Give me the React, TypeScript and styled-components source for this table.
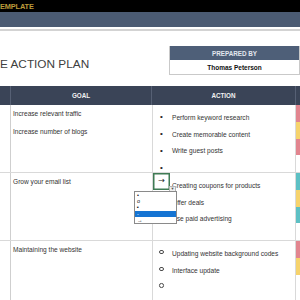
import React from 'react'
import styled, { createGlobalStyle } from 'styled-components'

const GlobalStyle = createGlobalStyle`
  body {
    margin: 0;
    background: #ffffff;
    font-family: 'Liberation Sans', Arial, sans-serif;
    overflow: hidden;
  }
`

const Page = styled.div`
  width: 300px;
  height: 300px;
  overflow: hidden;
  background: #ffffff;
`

const TopBar = styled.div`
  height: 12px;
  background: #000000;
  display: flex;
  align-items: center;
`

const TopTitle = styled.span`
  font-size: 7.4px;
  font-weight: 700;
  color: #bb9a3a;
  letter-spacing: -0.15px;
`

const Band = styled.div`
  height: 15px;
  background: #4b5b73;
`

const BandRule = styled.div`
  height: 2px;
  margin-top: 2px;
  background: #d3d3d3;
`

const InfoSection = styled.div`
  height: 55px;
  display: flex;
  align-items: flex-start;
  justify-content: space-between;
  padding-top: 15px;
  box-sizing: border-box;
`

const PlanTitle = styled.h1`
  margin: 11px 0 0 0;
  font-size: 11.8px;
  font-weight: 400;
  color: #404040;
  white-space: nowrap;
`

const InfoBoxes = styled.div`
  display: flex;
  gap: 2px;
  margin-right: -60px;
`

const InfoBox = styled.div<{ $width: number }>`
  width: ${(p) => p.$width}px;
  border: 1px solid #c9c9c9;
  border-top: none;
`

const InfoHead = styled.div`
  height: 14px;
  background: #4e5f78;
  color: #e3e7ee;
  font-size: 6.3px;
  font-weight: 700;
  display: flex;
  align-items: center;
  justify-content: center;
`

const InfoValue = styled.div`
  height: 14px;
  color: #111111;
  font-size: 6.5px;
  font-weight: 700;
  display: flex;
  align-items: center;
  justify-content: center;
`

const TableHead = styled.div`
  height: 19px;
  display: grid;
  grid-template-columns: 11px 141px 144px 4px;
  background: #3a4457;
`

const HeadCell = styled.div`
  border-right: 1px solid #566074;
  color: #f2f2f2;
  font-size: 6.3px;
  font-weight: 700;
  display: flex;
  align-items: center;
  justify-content: center;
  &:last-child {
    border-right: none;
  }
`

const Row = styled.div`
  display: grid;
  grid-template-columns: 11px 141px 148px;
  border-bottom: 1px solid #d9d9d9;
`

const LeadCell = styled.div`
  border-right: 1px solid #cfcfcf;
`

const GoalCell = styled.div`
  padding: 4px 0 0 2px;
  display: flex;
  flex-direction: column;
`

const GoalText = styled.div`
  height: 17.5px;
  font-size: 6.6px;
  line-height: 10px;
  color: #333333;
`

const ActionCell = styled.div`
  border-left: 1px solid #d9d9d9;
  display: flex;
  flex-direction: column;
`

const ActionLine = styled.div`
  height: 16.75px;
  display: grid;
  grid-template-columns: 17px 1fr 4px;
`

const Bullet = styled.div<{ $selected?: boolean; $font?: string }>`
  position: relative;
  display: flex;
  align-items: flex-end;
  justify-content: center;
  padding-bottom: 0.5px;
  font-family: ${(p) => p.$font ?? "'Liberation Sans', Arial, sans-serif"};
  font-size: 8px;
  line-height: 9px;
  color: #262626;
  box-sizing: border-box;
  ${(p) =>
    p.$selected
      ? 'border: 1px solid #3f7b54; box-shadow: inset 0 0 0 0.5px #3f7b54; align-items: center; padding: 0 0 1px 0;'
      : ''}
`

/* hollow "o" marker drawn as a ring */
const Ring = styled.span`
  width: 2.5px;
  height: 2.5px;
  margin-bottom: 3px;
  border: 1px solid #4a4a4a;
  border-radius: 50%;
`

const ActionText = styled.div`
  display: flex;
  align-items: flex-end;
  padding: 0 0 0 2px;
  font-size: 6.6px;
  line-height: 8px;
  color: #333333;
  white-space: nowrap;
  border-right: 1px solid #d9d9d9;
`

const Strip = styled.div<{ $color: string }>`
  background: ${(p) => p.$color};
`

const DropButton = styled.div`
  position: absolute;
  left: 15px;
  top: 12px;
  width: 7px;
  height: 6px;
  background: #eeeeee;
  border: 1px solid #b5b5b5;
  box-sizing: border-box;
  font-family: 'Liberation Sans', Arial, sans-serif;
  font-size: 4px;
  line-height: 4px;
  color: #555555;
  display: flex;
  align-items: center;
  justify-content: center;
  z-index: 2;
`

const DropList = styled.div`
  position: absolute;
  left: -20px;
  top: 17px;
  width: 43px;
  background: #ffffff;
  border: 1px solid #8a8a8a;
  box-sizing: border-box;
  font-family: 'Liberation Sans', Arial, sans-serif;
  z-index: 3;
`

const DropItem = styled.div<{ $active?: boolean }>`
  height: 6.2px;
  font-size: 5.5px;
  line-height: 6.2px;
  padding-left: 2px;
  text-align: left;
  color: ${(p) => (p.$active ? '#ffffff' : '#111111')};
  background: ${(p) => (p.$active ? '#1574d3' : 'transparent')};
`

const RED = '#e2858f'
const YELLOW = '#f6d36c'
const TEAL = '#5dc0c4'
const NONE = '#ffffff'

type Line = { bullet: string; text: string; color: string; selected?: boolean }

const rows: { goals: string[]; lines: Line[] }[] = [
  {
    goals: ['Increase relevant traffic', 'Increase number of blogs'],
    lines: [
      { bullet: '•', text: 'Perform keyword research', color: RED },
      { bullet: '•', text: 'Create memorable content', color: YELLOW },
      { bullet: '•', text: 'Write guest posts', color: RED },
      { bullet: '•', text: '', color: NONE },
    ],
  },
  {
    goals: ['Grow your email list'],
    lines: [
      { bullet: '→', text: 'Creating coupons for products', color: TEAL, selected: true },
      { bullet: '', text: 'Offer deals', color: YELLOW },
      { bullet: '', text: 'Use paid advertising', color: TEAL },
      { bullet: '', text: '', color: NONE },
    ],
  },
  {
    goals: ['Maintaining the website'],
    lines: [
      { bullet: 'o', text: 'Updating website background codes', color: RED },
      { bullet: 'o', text: 'Interface update', color: YELLOW },
      { bullet: 'o', text: '', color: NONE },
      { bullet: '', text: '', color: NONE },
    ],
  },
]

const options = ['•', 'o', '▪', '-', '→']

export default function App() {
  return (
    <Page>
      <GlobalStyle />
      <TopBar>
        <TopTitle>EMPLATE</TopTitle>
      </TopBar>
      <Band />
      <BandRule />
      <InfoSection>
        <PlanTitle>E ACTION PLAN</PlanTitle>
        <InfoBoxes>
          <InfoBox $width={129}>
            <InfoHead>PREPARED BY</InfoHead>
            <InfoValue>Thomas Peterson</InfoValue>
          </InfoBox>
          <InfoBox $width={56}>
            <InfoHead />
            <InfoValue />
          </InfoBox>
        </InfoBoxes>
      </InfoSection>
      <TableHead>
        <HeadCell />
        <HeadCell>GOAL</HeadCell>
        <HeadCell>ACTION</HeadCell>
        <HeadCell />
      </TableHead>
      {rows.map((row, i) => (
        <Row key={i}>
          <LeadCell />
          <GoalCell>
            {row.goals.map((g) => (
              <GoalText key={g}>{g}</GoalText>
            ))}
          </GoalCell>
          <ActionCell>
            {row.lines.map((line, j) => (
              <ActionLine key={j}>
                <Bullet
                  $selected={line.selected}
                  $font={line.bullet === '→' ? "'DejaVu Sans', sans-serif" : undefined}
                >
                  {line.bullet === 'o' ? <Ring /> : line.bullet}
                  {line.selected && (
                    <>
                      <DropButton>▼</DropButton>
                      <DropList>
                        {options.map((o, k) => (
                          <DropItem key={k} $active={k === 3}>
                            {o}
                          </DropItem>
                        ))}
                      </DropList>
                    </>
                  )}
                </Bullet>
                <ActionText>{line.text}</ActionText>
                <Strip $color={line.color} />
              </ActionLine>
            ))}
          </ActionCell>
        </Row>
      ))}
    </Page>
  )
}
